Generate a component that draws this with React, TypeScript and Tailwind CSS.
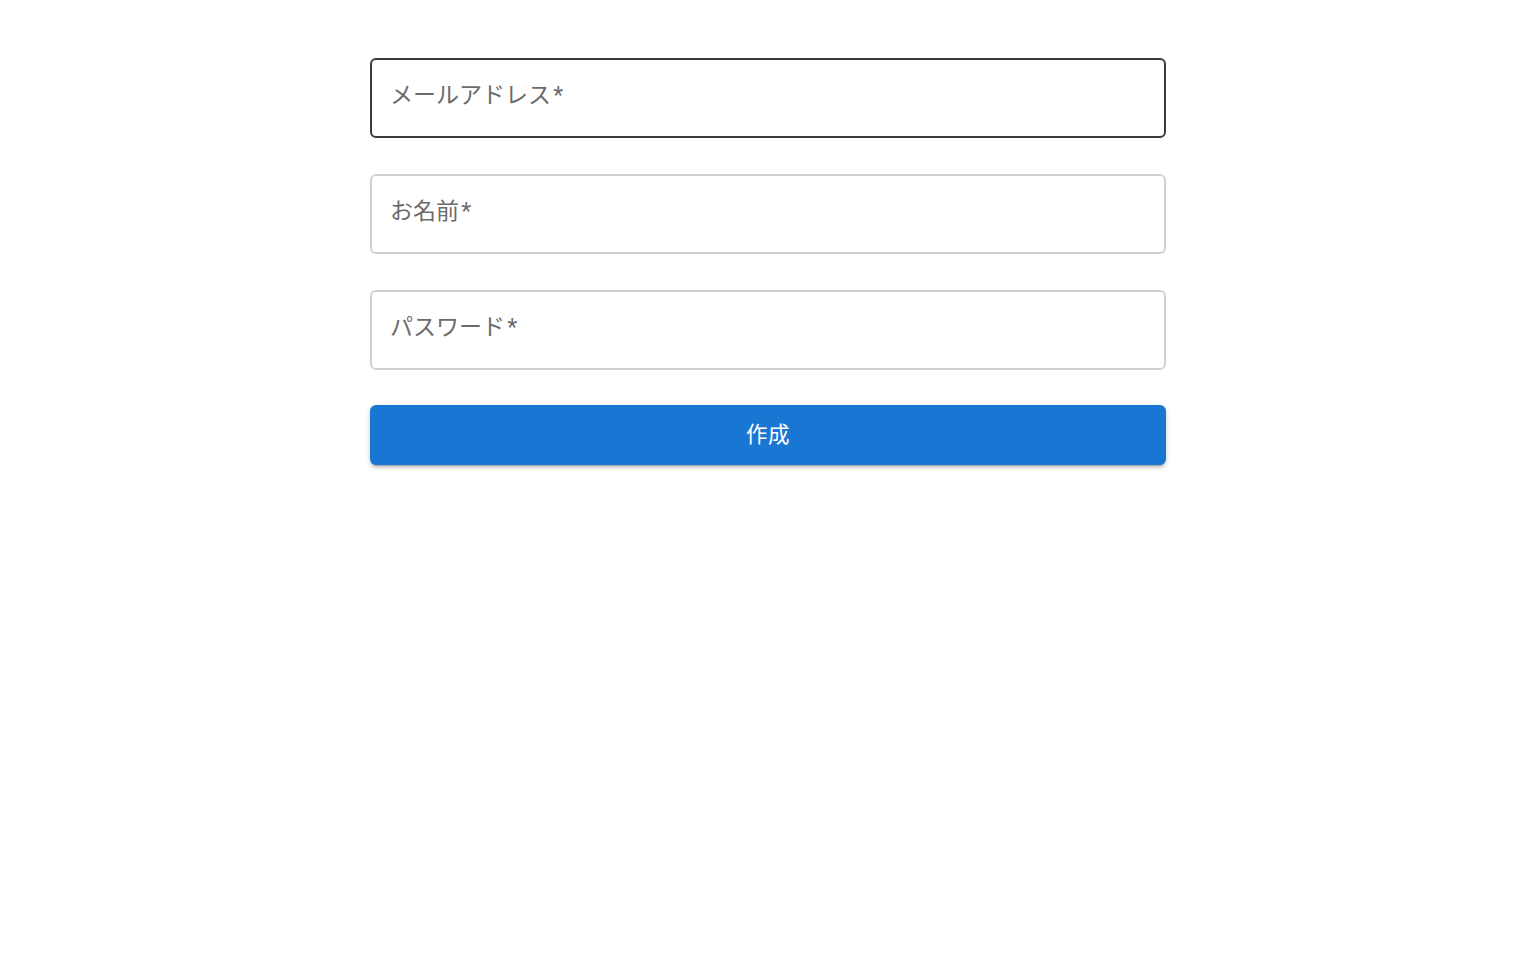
import React from 'react';

const fields = [
  { label: 'メールアドレス', type: 'email', active: true },
  { label: 'お名前', type: 'text', active: false },
  { label: 'パスワード', type: 'password', active: false },
];

export default function App() {
  return (
    <div
      className="min-h-screen bg-white"
      style={{ fontFamily: 'Roboto, "Noto Sans CJK JP", sans-serif' }}
    >
      <form className="mx-auto flex w-[796px] flex-col pt-[58px]">
        {fields.map((f) => (
          <div
            key={f.label}
            className={`mb-[36px] flex h-[80px] items-center rounded-[6px] border-2 px-[18px] ${
              f.active ? 'border-[#3a3a3a]' : 'border-[#d2d2d2]'
            }`}
          >
            <input
              type={f.type}
              placeholder={`${f.label}\u200a*`}
              className="-mt-[6px] w-full bg-transparent text-[23px] leading-[33px] text-[#212121] outline-none placeholder:text-[#6b6b6b]"
            />
          </div>
        ))}
        <button
          type="button"
          className="-mt-[1px] h-[60px] w-full rounded-[6px] bg-[#1976d2] text-[21.5px] font-normal tracking-[0.6px] text-white shadow-[0_4px_1px_-3px_rgba(0,0,0,0.2),0_3px_3px_0_rgba(0,0,0,0.14),0_1px_7px_0_rgba(0,0,0,0.12)]"
        >
          作成
        </button>
      </form>
    </div>
  );
}
